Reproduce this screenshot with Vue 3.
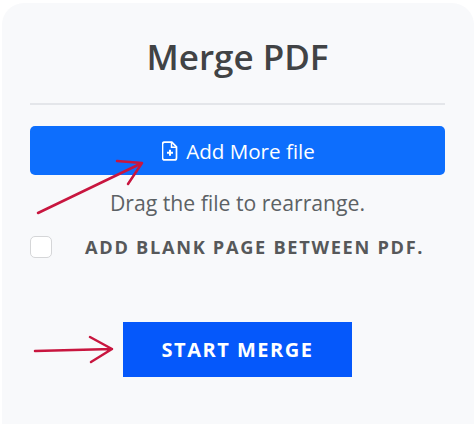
<script setup>
import { ref } from 'vue';

const blankPage = ref(false);
</script>

<template>
  <div class="merge-card">
    <h1 class="merge-title">Merge PDF</h1>
    <hr class="merge-line" />

    <button class="add-btn" type="button">
      <svg class="add-icon" viewBox="0 0 16 20" width="16" height="20" fill="none" stroke="currentColor">
        <path d="M2.5 1.2h7.3l4.7 4.7v11a2 2 0 0 1-2 2h-10a2 2 0 0 1-2-2v-13.700a2 2 0 0 1 2-2z" stroke-width="1.700" />
        <path d="M9.500 1.500v4.700h4.700" stroke-width="1.500" />
        <path d="M8 8.800v6M5 11.800h6" stroke-width="2" />
      </svg>
      <span>Add More file</span>
    </button>

    <p class="drag-hint">Drag the file to rearrange.</p>

    <label class="blank-row">
      <input v-model="blankPage" class="blank-check" type="checkbox" />
      <span class="blank-label">ADD BLANK PAGE BETWEEN PDF.</span>
    </label>

    <div class="start-wrap">
      <button class="start-btn" type="button">START MERGE</button>
    </div>

    <!-- hand drawn arrows on top of the screenshot -->
    <svg class="arrows" viewBox="0 0 474 424" width="474" height="424" fill="none">
      <path d="M38 213L142 163M117 161L142 163L128 184" />
      <path d="M35 351L112 349M90 337L112 349L91 362" />
    </svg>
  </div>
</template>

<style>
html, body {
  margin: 0;
  background: #fff;
}
</style>

<style scoped>
.merge-card {
  position: relative;
  box-sizing: border-box;
  width: 472px;
  height: 421px;
  margin: 3px 0 0 2px;
  padding: 0 29px 0 28px;
  background: #f8f9fb;
  border-radius: 22px 22px 0 0;
  font-family: "Open Sans", "Noto Sans", sans-serif;
  overflow: hidden;
}
.merge-title {
  margin: 0;
  padding-top: 30px;
  font-size: 35px;
  line-height: 47px;
  font-weight: 600;
  color: #414345;
  text-align: center;
}
.merge-line {
  margin: 23px 0 0;
  border: 0;
  height: 2px;
  background: #e4e6ea;
}
.add-btn {
  display: flex;
  align-items: center;
  justify-content: center;
  gap: 8px;
  width: 100%;
  height: 49px;
  margin-top: 21px;
  padding: 0 0 0 2px;
  border: 0;
  border-radius: 5px;
  background: #0d6efd;
  color: #fff;
  font: inherit;
  font-size: 20.600px;
}
.add-icon {
  flex: none;
}
.drag-hint {
  margin: 14px 0 0;
  font-size: 21.200px;
  line-height: 28px;
  color: #5c6165;
  text-align: center;
}
.blank-row {
  display: flex;
  align-items: center;
  gap: 33px;
  margin-top: 18px;
}
.blank-check {
  appearance: none;
  flex: none;
  width: 22px;
  height: 22px;
  margin: 0;
  background: #fff;
  border: 1px solid #d5d6d8;
  border-radius: 5px;
}
.blank-label {
  font-size: 18.200px;
  font-weight: 700;
  letter-spacing: 1.700px;
  color: #56585a;
  white-space: nowrap;
}
.start-wrap {
  display: flex;
  justify-content: center;
  margin-top: 63px;
}
.start-btn {
  width: 229px;
  height: 55px;
  border: 0;
  background: #0558fb;
  color: #fff;
  font: inherit;
  font-size: 20px;
  font-weight: 700;
  letter-spacing: 1.500px;
}
.arrows {
  position: absolute;
  left: -2px;
  top: -3px;
  pointer-events: none;
}
.arrows path {
  stroke: #c8163f;
  stroke-width: 2.500;
  stroke-linecap: round;
  stroke-linejoin: round;
}
</style>
